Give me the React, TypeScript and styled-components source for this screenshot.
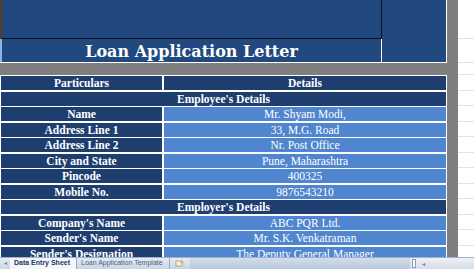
import React from 'react';
import styled, { createGlobalStyle } from 'styled-components';

const GlobalStyle = createGlobalStyle`
  html, body {
    margin: 0;
    padding: 0;
    width: 474px;
    height: 269px;
    overflow: hidden;
    background: #ffffff;
  }
`;

const BANNER = '#21497f';
const DARK = '#1d3e6f';
const LIGHT = '#4f86cf';
const GREY = '#7f7f7f';

const Page = styled.div`
  width: 474px;
  height: 269px;
  display: flex;
  flex-direction: column;
  overflow: hidden;
`;

const Sheet = styled.div`
  flex: 1;
  min-height: 0;
  display: flex;
  overflow: hidden;
`;

const Content = styled.div`
  width: 447px;
  flex-shrink: 0;
  background: ${GREY};
  display: flex;
  flex-direction: column;
`;

const Banner = styled.div`
  flex-shrink: 0;
  display: grid;
  grid-template-columns: 382px 64px;
  grid-template-rows: 39px 23px;
  border-right: 1px solid #ffffff;
  border-bottom: 1px solid #ffffff;
  background: ${BANNER};
`;

const TopCell = styled.div`
  border-right: 1px solid #111;
  border-bottom: 1px solid #111;
  border-left: 2px solid #5a3a2a;
`;

const SideCell = styled.div`
  grid-row: 1 / 3;
  grid-column: 2;
`;

const TitleCell = styled.div`
  border-right: 1px solid #ffffff;
  border-left: 2px solid #8db3e2;
  display: flex;
  align-items: center;
  justify-content: center;
  color: #ffffff;
  font-family: 'DejaVu Serif', 'Liberation Serif', serif;
  font-weight: bold;
  font-size: 16px;
  padding-top: 2px;
`;

const Spacer = styled.div`
  flex-shrink: 0;
  height: 12px;
`;

const Table = styled.div`
  flex-shrink: 0;
  display: grid;
  grid-template-columns: 161px 1fr;
  grid-auto-rows: 14px;
  gap: 1.5px 2px;
  padding: 1px;
  background: #ffffff;
`;

const Cell = styled.div<{ $tone: 'dark' | 'light'; $bold?: boolean; $span?: boolean }>`
  grid-column: ${(p) => (p.$span ? '1 / 3' : 'auto')};
  background: ${(p) => (p.$tone === 'dark' ? DARK : LIGHT)};
  color: #ffffff;
  font-family: 'Liberation Serif', 'Times New Roman', serif;
  font-weight: ${(p) => (p.$bold ? 'bold' : 'normal')};
  font-size: 11.5px;
  line-height: 14px;
  text-align: center;
  white-space: nowrap;
  overflow: hidden;
`;

const GreyStrip = styled.div`
  width: 11px;
  flex-shrink: 0;
  background: ${GREY};
`;

const Blank = styled.div`
  flex: 1;
  display: flex;
  flex-direction: column;
  background: #ffffff;
`;

const GridLine = styled.div<{ $h: number }>`
  height: ${(p) => p.$h}px;
  flex-shrink: 0;
  box-sizing: border-box;
  border-bottom: 1px solid #e4e4e4;
`;

const TabBar = styled.div`
  height: 11px;
  flex-shrink: 0;
  display: flex;
  align-items: stretch;
  background: linear-gradient(#e6ebf3, #c9d5e6);
  border-top: 1px solid #9fb2cc;
  font-family: 'Liberation Sans', Arial, sans-serif;
  font-size: 7px;
  line-height: 10px;
`;

const NavArrow = styled.div`
  width: 10px;
  color: #6c7f9c;
  font-size: 6px;
  text-align: center;
`;

const Tab = styled.div<{ $active?: boolean }>`
  padding: 0 6px 0 4px;
  background: ${(p) => (p.$active ? '#f4f6fa' : 'transparent')};
  color: ${(p) => (p.$active ? '#1b3766' : '#4b5f80')};
  font-weight: ${(p) => (p.$active ? 'bold' : 'normal')};
  border-right: 1px solid #97a9c4;
  white-space: nowrap;
`;

const NewTab = styled.div`
  width: 20px;
  display: flex;
  align-items: center;
  justify-content: center;
`;

const TabFill = styled.div`
  flex: 1;
  background: linear-gradient(#d3ddea, #b9c8dc);
`;

const Scroll = styled.div`
  width: 62px;
  display: flex;
  align-items: center;
  gap: 2px;
  padding-left: 2px;
  background: linear-gradient(#eef1f6, #d6dde8);
`;

const Grip = styled.div`
  width: 2px;
  height: 7px;
  background: #ffffff;
  border: 1px solid #8899b4;
`;

const rows: { label: string; value?: string; kind: 'head' | 'section' | 'item' }[] = [
  { label: 'Particulars', value: 'Details', kind: 'head' },
  { label: "Employee's Details", kind: 'section' },
  { label: 'Name', value: 'Mr. Shyam Modi,', kind: 'item' },
  { label: 'Address Line 1', value: '33, M.G. Road', kind: 'item' },
  { label: 'Address Line 2', value: 'Nr. Post Office', kind: 'item' },
  { label: 'City and State', value: 'Pune, Maharashtra', kind: 'item' },
  { label: 'Pincode', value: '400325', kind: 'item' },
  { label: 'Mobile No.', value: '9876543210', kind: 'item' },
  { label: "Employer's Details", kind: 'section' },
  { label: "Company's Name", value: 'ABC PQR Ltd.', kind: 'item' },
  { label: "Sender's Name", value: 'Mr. S.K. Venkatraman', kind: 'item' },
  { label: "Sender's Designation", value: 'The Deputy General Manager', kind: 'item' },
];

const gridHeights = [39, 24, 12, ...Array(12).fill(15.5)];

const App = () => (
  <>
    <GlobalStyle />
    <Page>
      <Sheet>
        <Content>
          <Banner>
            <TopCell />
            <SideCell />
            <TitleCell>Loan Application Letter</TitleCell>
          </Banner>
          <Spacer />
          <Table>
            {rows.map((r) =>
              r.kind === 'section' ? (
                <Cell key={r.label} $tone="dark" $bold $span>
                  {r.label}
                </Cell>
              ) : (
                <React.Fragment key={r.label}>
                  <Cell $tone="dark" $bold>
                    {r.label}
                  </Cell>
                  <Cell $tone={r.kind === 'head' ? 'dark' : 'light'} $bold={r.kind === 'head'}>
                    {r.value}
                  </Cell>
                </React.Fragment>
              )
            )}
          </Table>
        </Content>
        <GreyStrip />
        <Blank>
          {gridHeights.map((h, i) => (
            <GridLine key={i} $h={h} />
          ))}
        </Blank>
      </Sheet>
      <TabBar>
        <NavArrow>◂</NavArrow>
        <Tab $active>Data Entry Sheet</Tab>
        <Tab>Loan Application Template</Tab>
        <NewTab>
          <svg width="10" height="7" viewBox="0 0 10 7">
            <rect x="1" y="1" width="6" height="5" fill="#f7f3e3" stroke="#b29a5c" strokeWidth="0.8" />
            <circle cx="7" cy="2" r="1.6" fill="#e8b64a" />
          </svg>
        </NewTab>
        <TabFill />
        <Scroll>
          <Grip />
          <NavArrow>◂</NavArrow>
        </Scroll>
      </TabBar>
    </Page>
  </>
);

export default App;
